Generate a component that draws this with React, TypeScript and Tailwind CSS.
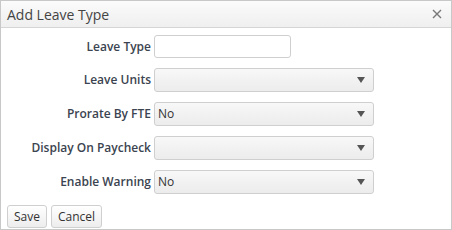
import { useState } from "react";

const fieldRows = [
  { label: "Leave Units", value: "" },
  { label: "Prorate By FTE", value: "No" },
  { label: "Display On Paycheck", value: "" },
  { label: "Enable Warning", value: "No" },
];

function SelectBox({ value }: { value: string }) {
  return (
    <div className="flex items-center justify-between w-[220px] h-[24px] border border-[#cfcfcf] rounded-[3px] bg-gradient-to-b from-[#f8f8f8] to-[#ececec] pl-[3px] pr-[8px]">
      <span className="text-[12px] text-[#333]">{value}</span>
      <svg width="8" height="6" viewBox="0 0 8 6">
        <path d="M0 0 L8 0 L4 6 Z" fill="#555" />
      </svg>
    </div>
  );
}

export default function App() {
  const [leaveType, setLeaveType] = useState("");

  return (
    <div
      className="w-[452px] h-[230px] border border-[#c8c8c8] bg-white flex flex-col"
      style={{ fontFamily: '"Open Sans", "Liberation Sans", sans-serif' }}
    >
      <div className="h-[27px] shrink-0 flex items-center justify-between pl-[6px] pr-[9px] bg-gradient-to-b from-[#fbfbfb] to-[#efefef] border-b border-[#d5d5d5]">
        <span className="text-[14px] text-[#444]">Add Leave Type</span>
        <svg width="10" height="10" viewBox="0 0 10 10">
          <path d="M1 1 L9 9 M9 1 L1 9" stroke="#777" strokeWidth="1.4" />
        </svg>
      </div>

      <div className="flex flex-col pt-[7px]">
        <div className="flex items-center h-[23px] mb-[10px]">
          <label className="w-[150px] text-right text-[12px] font-semibold text-[#3b4450]">Leave Type</label>
          <input
            value={leaveType}
            onChange={(e) => setLeaveType(e.target.value)}
            className="ml-[3px] w-[137px] h-[23px] border border-[#cfcfcf] rounded-[3px] bg-white outline-none px-1 text-[12px]"
          />
        </div>
        {fieldRows.map((row) => (
          <div key={row.label} className="flex items-center h-[24px] mb-[10px]">
            <label className="w-[150px] text-right text-[12px] font-semibold text-[#3b4450]">{row.label}</label>
            <div className="ml-[3px]">
              <SelectBox value={row.value} />
            </div>
          </div>
        ))}
      </div>

      <div className="flex gap-[4px] pl-[6px] mt-[1px]">
        <button className="h-[23px] px-[6px] border border-[#cfcfcf] rounded-[3px] bg-gradient-to-b from-white to-[#ededed] text-[12px] text-[#333]">
          Save
        </button>
        <button className="h-[23px] px-[6px] border border-[#cfcfcf] rounded-[3px] bg-gradient-to-b from-white to-[#ededed] text-[12px] text-[#333]">
          Cancel
        </button>
      </div>
    </div>
  );
}
